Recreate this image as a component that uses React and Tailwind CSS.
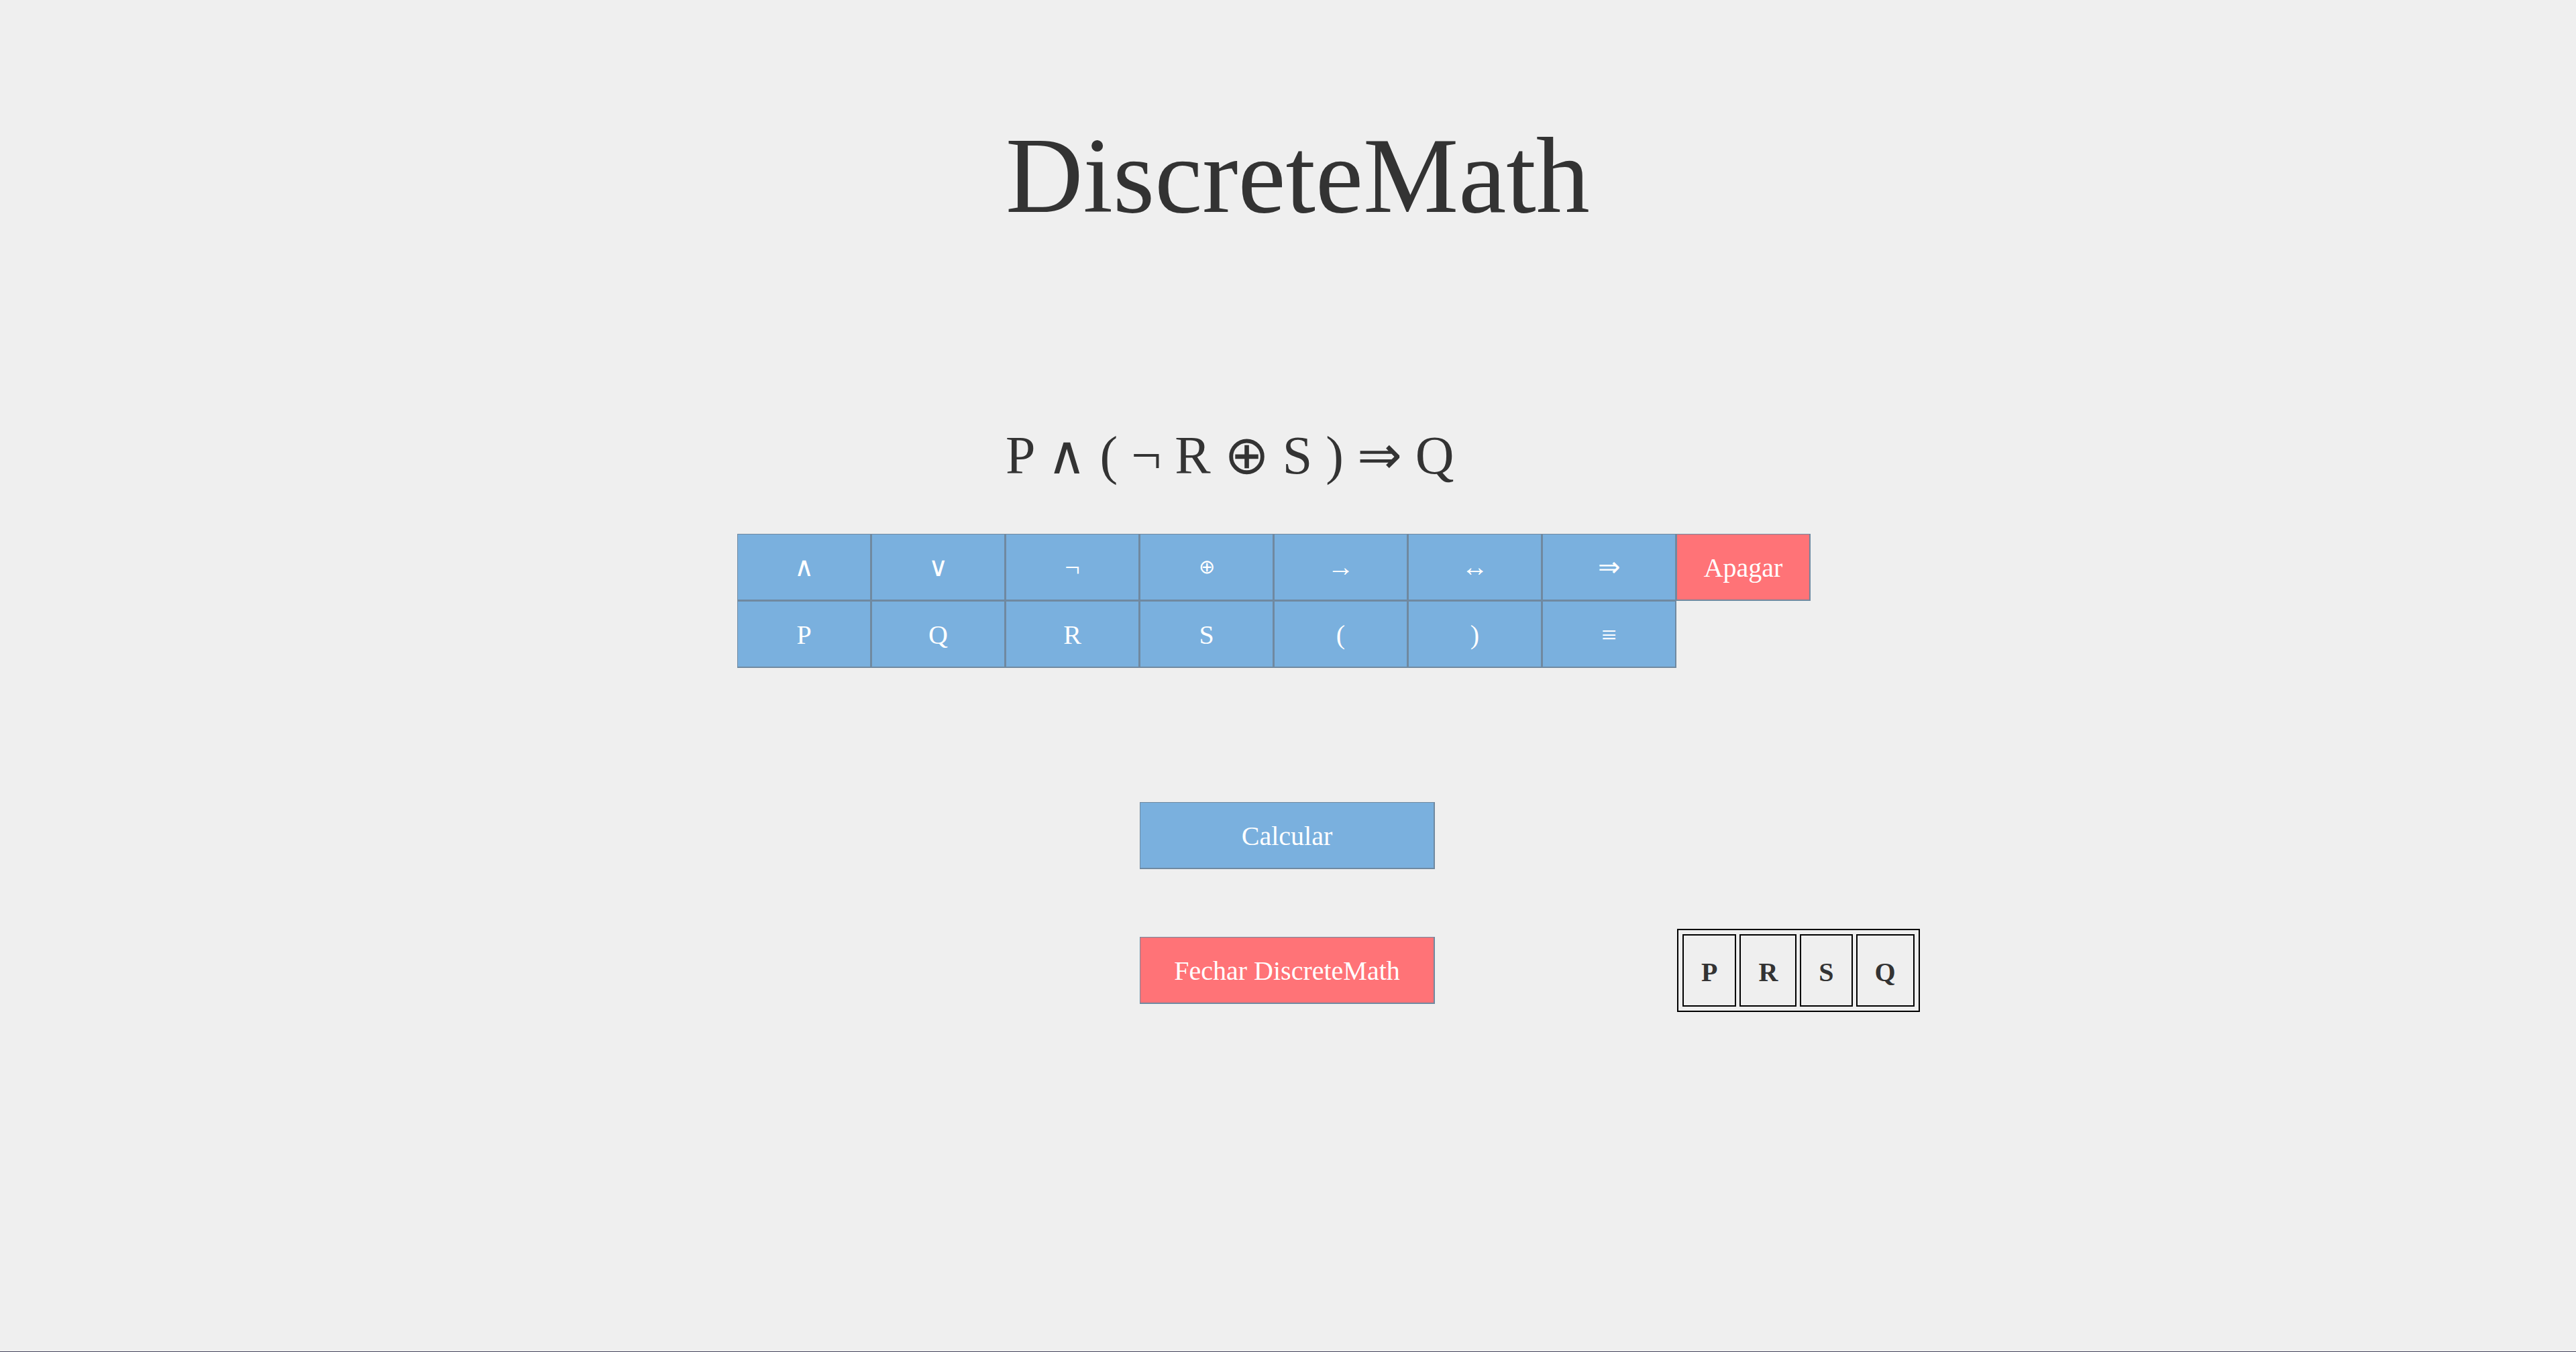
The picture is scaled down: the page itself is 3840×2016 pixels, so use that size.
export default function App() {
  const row1 = ["∧", "∨", "¬", "⊕", "→", "↔", "⇒"];
  const row2 = ["P", "Q", "R", "S", "(", ")", "≡"];
  const btn =
    "flex shrink-0 items-center justify-center border-t border-l border-r-2 border-b-2 border-[#7089a0] text-white text-[40px] leading-none whitespace-nowrap";
  const vars = ["P", "R", "S", "Q"];
  return (
    <div className="h-[2016px] overflow-hidden bg-[#efefef] border-b border-[#45455e] font-['Liberation_Serif',serif] text-[#333333]">
      <div className="mx-auto w-[1642px] pt-[182px]">
        <h1 className="ml-[400px] text-[160px] leading-none">DiscreteMath</h1>
        <div className="ml-[400px] mt-[297px] text-[80px] leading-none whitespace-pre">
          P ∧ ( ¬ R ⊕ S ) ⇒ Q
        </div>
        <div className="mt-[77px] grid grid-cols-[repeat(8,200px)] auto-rows-[100px]">
          {row1.map((s) => (
            <div key={s} className={btn + " bg-[#7ab0de]"}>
              <span className={s === "⊕" ? "text-[29px]" : ""}>{s}</span>
            </div>
          ))}
          <div className={btn + " bg-[#ff7377] pt-[2px]"}>Apagar</div>
          {row2.map((s) => (
            <div key={"b" + s} className={btn + " bg-[#7ab0de] pt-[2px]"}>
              {s}
            </div>
          ))}
        </div>
        <div className={btn + " mt-[200px] ml-[600px] w-[440px] h-[100px] bg-[#7ab0de] pt-[2px]"}>
          Calcular
        </div>
        <div className="mt-[89px] flex items-center">
          <div className={btn + " ml-[600px] w-[440px] h-[100px] bg-[#ff7377] pt-[2px]"}>
            Fechar DiscreteMath
          </div>
          <div className="ml-[361px] flex shrink-0 gap-[5px] border-2 border-black p-[6px]">
            {vars.map((v) => (
              <div
                key={v}
                className="flex h-[108px] items-center justify-center border-2 border-black px-[26px] pt-[6px] text-[40px] font-bold leading-none"
              >
                {v}
              </div>
            ))}
          </div>
        </div>
      </div>
    </div>
  );
}
